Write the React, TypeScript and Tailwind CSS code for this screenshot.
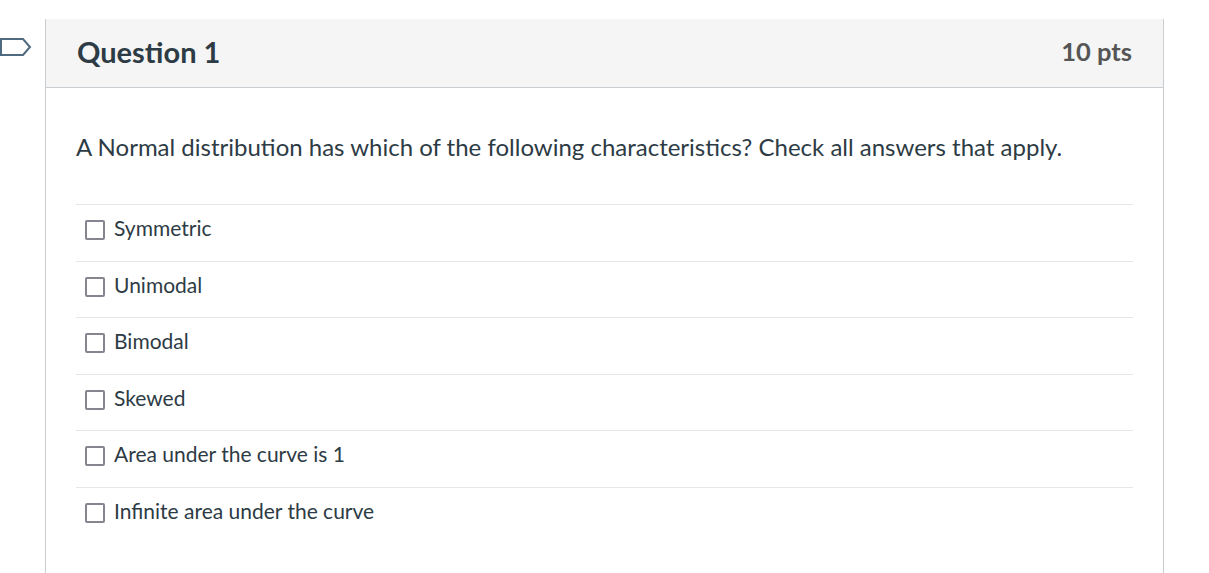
const answers = [
  'Symmetric',
  'Unimodal',
  'Bimodal',
  'Skewed',
  'Area under the curve is 1',
  'Infinite area under the curve',
];

const FlagIcon = () => (
  <svg width="32" height="20" viewBox="0 0 32 20" fill="none">
    <path d="M1 2 H23 L30 10 L23 18 H1 Z" stroke="#4f6a7f" strokeWidth="2" strokeLinejoin="miter" />
  </svg>
);

export default function App() {
  return (
    <div className="w-[1209px] h-[573px] bg-white overflow-hidden relative" style={{ fontFamily: 'Lato, "Noto Sans", sans-serif' }}>
      <div className="absolute left-0 top-[37px]">
        <FlagIcon />
      </div>
      <div className="ml-[45px] mt-[19px] w-[1119px] border-x border-[#c7cdd1] min-h-[560px]">
        <div className="h-[69px] bg-[#f5f5f5] border-b border-[#c7cdd1] flex items-center justify-between pl-[31px] pr-[31px] pb-[3px]">
          <span className="text-[29px] font-bold text-[#2d3b45] leading-none">Question 1</span>
          <span className="text-[25.5px] font-bold text-[#555555] leading-none">10 pts</span>
        </div>
        <div className="px-[30px] pt-[42px]">
          <p className="text-[24px] text-[#2d3b45] leading-[34px]">
            A Normal distribution has which of the following characteristics? Check all answers that apply.
          </p>
          <div className="mt-[40px]">
            {answers.map((a) => (
              <div key={a} className="h-[56.5px] border-t border-[#e4e6e8] flex items-start pt-[15px] pl-[9px] gap-[9px]">
                <span className="w-[20px] h-[20px] border-2 border-[#86858f] rounded-[2px] bg-white shrink-0" />
                <span className="text-[21px] text-[#2d3b45] leading-[16px]">{a}</span>
              </div>
            ))}
          </div>
        </div>
      </div>
    </div>
  );
}
